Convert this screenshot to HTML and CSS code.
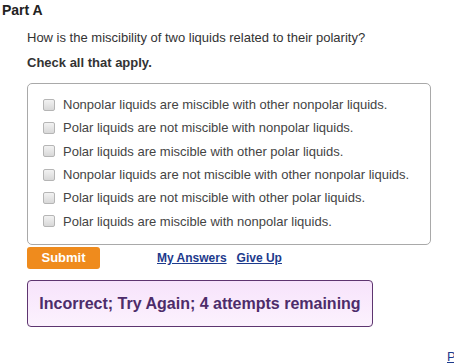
FILE: index.html
```html
<!DOCTYPE html>
<html>
<head>
	<title>Part A</title>
	<link rel="stylesheet" href="styles.css">
</head>
<body>
	<h2 class="part-title">Part A</h2>
	<div class="question">
		<p class="prompt">How is the miscibility of two liquids related to their polarity?</p>
		<p class="instruction">Check all that apply.</p>

		<!-- Answer choices -->
		<div class="choices">
			<label class="choice"><span class="box"></span>Nonpolar liquids are miscible with other nonpolar liquids.</label>
			<label class="choice"><span class="box"></span>Polar liquids are not miscible with nonpolar liquids.</label>
			<label class="choice"><span class="box"></span>Polar liquids are miscible with other polar liquids.</label>
			<label class="choice"><span class="box"></span>Nonpolar liquids are not miscible with other nonpolar liquids.</label>
			<label class="choice"><span class="box"></span>Polar liquids are not miscible with other polar liquids.</label>
			<label class="choice"><span class="box"></span>Polar liquids are miscible with nonpolar liquids.</label>
		</div>

		<!-- Buttons -->
		<div class="actions">
			<span class="submit">Submit</span>
			<a href="#" class="link my-answers">My Answers</a>
			<a href="#" class="link">Give Up</a>
		</div>

		<div class="feedback">Incorrect; Try Again; 4 attempts remaining</div>
	</div>
	<div class="footer">
		<a href="#" class="footer-link">Provide Feedback</a>
	</div>
</body>
</html>
```

FILE: styles.css
```css
* {
	margin: 0;
	padding: 0;
	box-sizing: border-box;
}

body {
	font-family: "Liberation Sans", Arial, sans-serif;
	color: #333;
	background-color: #fff;
	overflow: hidden;
	width: 454px;
	height: 364px;
}

.part-title {
	font-size: 14px;
	font-weight: bold;
	color: #222;
	padding: 2px 0 0 2px;
	line-height: 16px;
}

.question {
	padding-left: 27px;
}

.prompt {
	font-size: 13px;
	line-height: 16px;
	margin-top: 12px;
}

.instruction {
	font-size: 13px;
	font-weight: bold;
	line-height: 16px;
	margin-top: 9px;
}

/* Box around the choices */
.choices {
	width: 404px;
	height: 162px;
	margin-top: 12px;
	border: 1px solid #a9a9a9;
	border-radius: 5px;
	padding: 9px 0 0 15px;
}

.choice {
	display: flex;
	align-items: center;
	height: 23.3px;
	font-size: 13px;
	color: #444;
}

.box {
	width: 12px;
	height: 12px;
	margin-right: 8px;
	border: 1px solid #b5b5b5;
	border-radius: 2px;
	background: linear-gradient(#f2f2f2, #d8d8d8);
}

.actions {
	display: flex;
	align-items: center;
	margin-top: 2px;
	height: 22px;
}

.submit {
	width: 73px;
	height: 22px;
	line-height: 22px;
	text-align: center;
	background-color: #ef8b1d;
	border-radius: 3px;
	color: #fff;
	font-size: 13px;
	font-weight: bold;
}

.link {
	font-size: 12px;
	font-weight: bold;
	color: #1d3a8c;
	text-decoration: underline;
}

.my-answers {
	margin-left: 57px;
	margin-right: 10px;
}

/* Feedback message */
.feedback {
	width: 346px;
	height: 47px;
	margin-top: 11px;
	border: 1px solid #5e3570;
	border-radius: 4px;
	background: linear-gradient(#f7e3fb, #fcf2fe);
	color: #4d2c6a;
	font-size: 16px;
	font-weight: bold;
	display: flex;
	align-items: center;
	justify-content: center;
}

.footer {
	padding: 20px 0 0 447px;
	white-space: nowrap;
}

.footer-link {
	font-size: 13px;
	color: #1d3a8c;
}
```
